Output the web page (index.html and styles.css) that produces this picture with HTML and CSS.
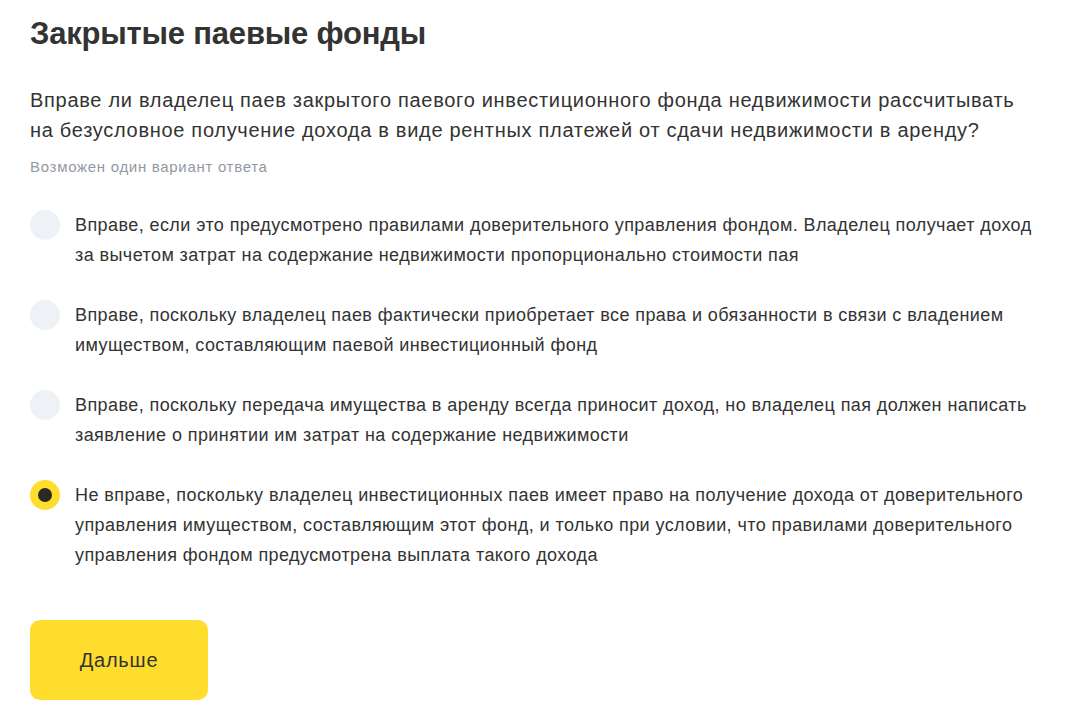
FILE: index.html
```html
<!DOCTYPE html>
<html lang="ru">
<head>
<meta charset="utf-8">
<link rel="stylesheet" href="styles.css">
</head>
<body>
<main class="page">
  <h1 class="title">Закрытые паевые фонды</h1>
  <p class="question">Вправе ли владелец паев закрытого паевого инвестиционного фонда недвижимости рассчитывать на безусловное получение дохода в виде рентных платежей от сдачи недвижимости в аренду?</p>
  <p class="hint">Возможен один вариант ответа</p>
  <ul class="options">
    <li class="option"><span class="radio"></span><span class="label">Вправе, если это предусмотрено правилами доверительного управления фондом. Владелец получает доход за вычетом затрат на содержание недвижимости пропорционально стоимости пая</span></li>
    <li class="option"><span class="radio"></span><span class="label">Вправе, поскольку владелец паев фактически приобретает все права и обязанности в связи с владением имуществом, составляющим паевой инвестиционный фонд</span></li>
    <li class="option"><span class="radio"></span><span class="label">Вправе, поскольку передача имущества в аренду всегда приносит доход, но владелец пая должен написать заявление о принятии им затрат на содержание недвижимости</span></li>
    <li class="option selected"><span class="radio"></span><span class="label">Не вправе, поскольку владелец инвестиционных паев имеет право на получение дохода от доверительного управления имуществом, составляющим этот фонд, и только при условии, что правилами доверительного управления фондом предусмотрена выплата такого дохода</span></li>
  </ul>
  <button class="next" type="button">Дальше</button>
</main>
</body>
</html>
```

FILE: styles.css
```css
html, body {
  margin: 0;
  padding: 0;
  background: #ffffff;
}
body {
  font-family: "Liberation Sans", Arial, sans-serif;
  color: #333333;
}
.page {
  padding: 14px 30px 0 30px;
}
.title {
  margin: 0;
  font-size: 31px;
  line-height: 40px;
  font-weight: 700;
  letter-spacing: -0.2px;
  color: #333333;
}
.question {
  margin: 31px 0 0 0;
  font-size: 20px;
  line-height: 30px;
  letter-spacing: 0.7px;
  max-width: 1010px;
}
.hint {
  margin: 12px 0 0 0;
  font-size: 15px;
  line-height: 20px;
  letter-spacing: 0.7px;
  color: #9299a2;
}
.options {
  list-style: none;
  margin: 33px 0 0 0;
  padding: 0;
  display: flex;
  flex-direction: column;
  gap: 30px;
}
.option {
  display: flex;
  align-items: flex-start;
  gap: 15px;
}
.radio {
  flex: 0 0 30px;
  width: 30px;
  height: 30px;
  border-radius: 50%;
  background: #eef1f6;
  display: flex;
  align-items: center;
  justify-content: center;
}
.option.selected .radio {
  background: #ffdd2d;
}
.option.selected .radio::after {
  content: "";
  width: 14px;
  height: 14px;
  border-radius: 50%;
  background: #2b2a22;
}
.label {
  font-size: 18px;
  line-height: 30px;
  letter-spacing: 0.42px;
  max-width: 970px;
}
.next {
  margin-top: 50px;
  width: 178px;
  height: 80px;
  border: none;
  border-radius: 10px;
  background: #ffdd2d;
  color: #333333;
  font-family: inherit;
  font-size: 20px;
  letter-spacing: 0.8px;
  padding: 0;
}
```
